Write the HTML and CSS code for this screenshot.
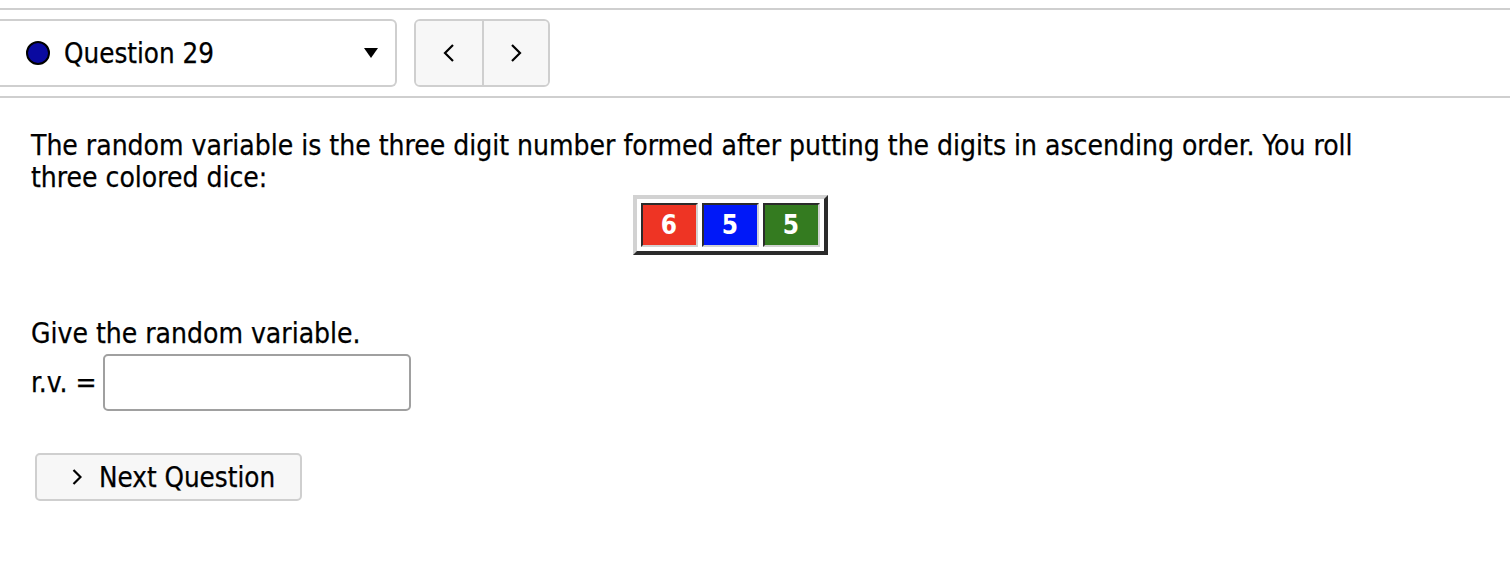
FILE: index.html
```html
<!doctype html>
<html>

<head>
  <title>Question 29</title>
  <link rel="stylesheet" href="styles.css">
</head>

<body>
  <div class="topbar">
    <div class="qselect">
      <span class="dot"></span>
      <span class="qlabel">Question 29</span>
      <svg class="caret" width="14" height="10" viewBox="0 0 14 10"><path d="M0 0H14L7 10Z" fill="#000"/></svg>
    </div>
    <div class="qnav">
      <button type="button" class="navbtn">
        <svg width="12" height="18" viewBox="0 0 12 18"><path d="M10 1L2 9l8 8" fill="none" stroke="#000" stroke-width="2.2"/></svg>
      </button>
      <button type="button" class="navbtn">
        <svg width="12" height="18" viewBox="0 0 12 18"><path d="M2 1l8 8-8 8" fill="none" stroke="#000" stroke-width="2.2"/></svg>
      </button>
    </div>
  </div>

  <div class="question">
    <p class="text">The random variable is the three digit number formed after putting the digits in ascending order. You roll three colored dice:</p>
    <div class="dice-row">
      <div class="dice">
        <span class="die red">6</span>
        <span class="die blue">5</span>
        <span class="die green">5</span>
      </div>
    </div>
    <p class="text prompt">Give the random variable.</p>
    <div class="answer">
      <label for="rv">r.v. =</label>
      <input type="text" id="rv" class="field">
    </div>
    <button type="button" class="next">
      <svg width="10" height="16" viewBox="0 0 10 16"><path d="M1.5 1l7 7-7 7" fill="none" stroke="#000" stroke-width="2.2"/></svg>
      Next Question
    </button>
  </div>
</body>

</html>
```

FILE: styles.css
```css
html {
  font-family: "DejaVu Sans Condensed", "DejaVu Sans", sans-serif;
  font-size: 28px;
  color: #000;
  -webkit-text-stroke: 0.25px #000;
}

body {
  margin: 0;
  background: #fff;
}

.topbar {
  margin-top: 8px;
  border-top: 2px solid #cfcfcf;
  border-bottom: 2px solid #cfcfcf;
  padding: 9px 0 9px 0;
  display: flex;
  gap: 17px;
}

.qselect {
  width: 397px;
  height: 68px;
  box-sizing: border-box;
  border: 2px solid #cfcfcf;
  border-left: none;
  border-radius: 0 6px 6px 0;
  display: flex;
  align-items: center;
  padding: 0 17px 0 26px;
  font-size: 27.5px;
}

.dot {
  width: 20px;
  height: 20px;
  border: 2px solid #000;
  border-radius: 50%;
  background: #0a0aa0;
  margin-right: 14px;
}

.qlabel {
  flex: 1;
}

.qnav {
  display: flex;
  height: 68px;
  box-sizing: border-box;
  border: 2px solid #cfcfcf;
  border-radius: 6px;
  background: #f7f7f7;
  overflow: hidden;
}

.navbtn {
  width: 66px;
  border: none;
  background: #f7f7f7;
  display: flex;
  align-items: center;
  justify-content: center;
  padding: 0;
}

.navbtn + .navbtn {
  border-left: 2px solid #cfcfcf;
}

.question {
  padding: 32px 81px 0 31px;
}

.text {
  margin: 0;
  line-height: 32px;
  max-width: 1360px;
}

.dice-row {
  text-align: center;
  margin-top: 1px;
}

.dice {
  display: inline-flex;
  gap: 4px;
  padding: 4px;
  border: 4px solid;
  border-color: #d2d2d2 #2b2b2b #2b2b2b #d2d2d2;
}

.die {
  width: 53px;
  height: 40px;
  border: 2px solid;
  border-color: #2b2b2b #d2d2d2 #d2d2d2 #2b2b2b;
  color: #fff;
  -webkit-text-stroke: 0;
  font-size: 26px;
  font-weight: bold;
  display: flex;
  align-items: center;
  justify-content: center;
}

.red {
  background: #ee3424;
}

.blue {
  background: #0018f8;
}

.green {
  background: #347b20;
}

.prompt {
  margin-top: 63px;
}

.answer {
  display: flex;
  align-items: center;
  gap: 6px;
  margin-top: 4px;
}

.field {
  width: 308px;
  height: 57px;
  box-sizing: border-box;
  border: 2px solid #a0a0a0;
  border-radius: 5px;
  font: inherit;
}

.next {
  margin: 42px 0 0 4px;
  width: 267px;
  height: 48px;
  border: 2px solid #cfcfcf;
  border-radius: 5px;
  background: #f7f7f7;
  font: inherit;
  font-size: 27.5px;
  display: flex;
  align-items: center;
  gap: 17px;
  padding: 0 0 0 35px;
}
```
